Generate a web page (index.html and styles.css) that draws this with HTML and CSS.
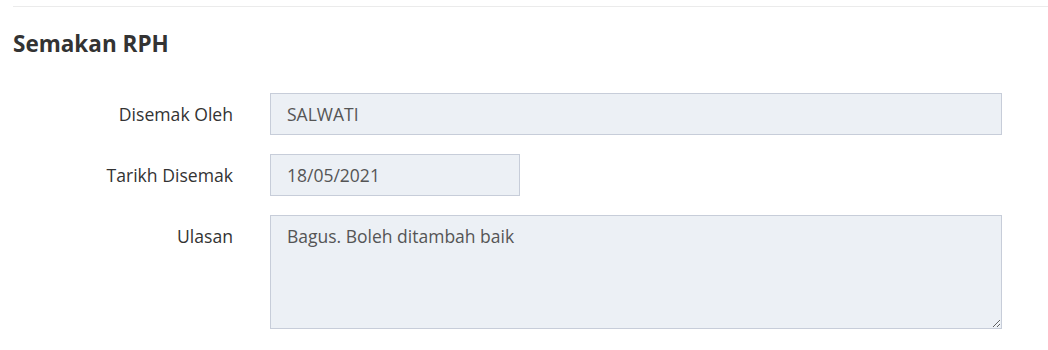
FILE: index.html
```html
<!DOCTYPE html>
<html>
<head>
<meta charset="utf-8">
<link rel="stylesheet" href="styles.css">
</head>
<body>
<div class="panel">
  <div class="rule"></div>
  <h2 class="title">Semakan RPH</h2>
  <form class="form">
    <label class="label">Disemak Oleh</label>
    <div class="field"><input class="input" type="text" value="SALWATI" readonly></div>
    <label class="label">Tarikh Disemak</label>
    <div class="field"><input class="input input-date" type="text" value="18/05/2021" readonly></div>
    <label class="label label-top">Ulasan</label>
    <div class="field"><textarea class="input textarea" readonly>Bagus. Boleh ditambah baik</textarea></div>
  </form>
</div>
</body>
</html>
```
FILE: styles.css
```css
* { box-sizing: border-box; }
html, body { margin: 0; padding: 0; background: #fff; }
body { font-family: "Open Sans", "Liberation Sans", sans-serif; color: #333; }
.panel { padding: 6px 0 0 13px; }
.rule { height: 1px; background: #ebebeb; }
.title { margin: 22px 0 0 0; font-size: 22.5px; font-weight: 700; line-height: 30px; color: #333; }
.form {
  margin-top: 34px;
  display: grid;
  grid-template-columns: 220px 1fr;
  column-gap: 37px;
  row-gap: 19px;
  padding-right: 46px;
}
.label {
  text-align: right;
  font-size: 17.6px;
  line-height: 42px;
  color: #333;
}
.label-top { align-self: start; }
.field { display: block; }
.input {
  display: block;
  width: 100%;
  height: 42px;
  padding: 0 16px;
  border: 1px solid #c7cdd9;
  background: #ecf0f5;
  font-family: "Open Sans", "Liberation Sans", sans-serif;
  font-size: 17.5px;
  color: #555;
  border-radius: 0;
  outline: none;
}
.input-date { width: 250px; }
.textarea {
  height: 114px;
  padding: 8px 16px;
  line-height: 24px;
  resize: vertical;
}
```
